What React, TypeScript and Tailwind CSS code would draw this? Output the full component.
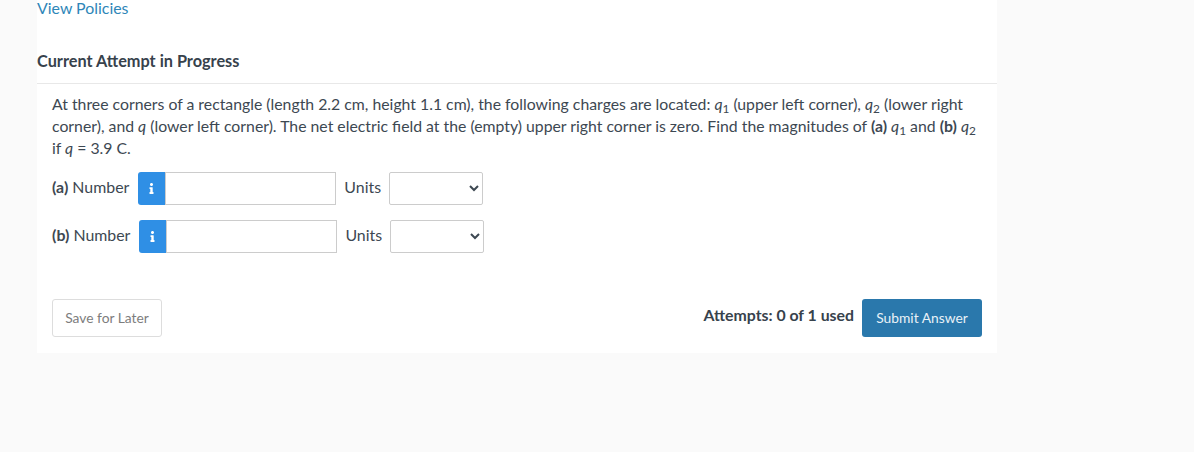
import { FaInfo } from 'react-icons/fa'

function Q({ n }: { n?: number }) {
  return (
    <span>
      <i>q</i>
      {n ? <sub>{n}</sub> : null}
    </span>
  )
}

function AnswerRow({ part }: { part: string }) {
  return (
    <div className="flex h-[33px] items-center">
      <span className="mb-1 mr-[9px] whitespace-nowrap text-[15.9px]">
        <b className="font-bold">({part})</b> Number
      </span>
      <button className="flex h-[33px] w-[27px] items-center justify-center rounded-l-[3px] bg-[#2f8fe5] text-white">
        <FaInfo className="h-[11px] w-[11px]" />
      </button>
      <input className="h-[33px] w-[170.5px] border border-[#ccc] bg-white" />
      <span className="mb-1 ml-[8.5px] mr-2 text-[15.9px]">Units</span>
      <select className="h-[33px] w-[94px] rounded-[2px] border border-[#ccc] bg-white">
        <option></option>
      </select>
    </div>
  )
}

export default function App() {
  return (
    <div className="h-[452px] overflow-hidden bg-[#fafafa] pl-[37px] font-['Lato','Open_Sans',sans-serif] text-[15.8px] text-[#3d4852]">
      <div className="h-[353px] w-[960px] bg-white">
        <a className="block h-[16px] text-[15.9px] leading-[16px] text-[#2e86b8]">View Policies</a>
        <h2 className="mt-[34px] text-[16.3px] leading-[22px] font-bold text-[#37424c]">Current Attempt in Progress</h2>
        <div className="mt-[11px] border-t border-[#e8e8e8] px-[15px] pt-[9px]">
          <p className="leading-[22px]">
            At three corners of a rectangle (length 2.2 cm, height 1.1 cm), the following charges are located: <Q n={1} /> (upper
            left corner), <Q n={2} /> (lower right corner), and <Q /> (lower left corner). The net electric field at the (empty)
            upper right corner is zero. Find the magnitudes of <b className="font-bold">(a)</b> <Q n={1} /> and{' '}
            <b className="font-bold">(b)</b> <Q n={2} /> if <Q /> = 3.9 C.
          </p>
          <div className="mt-[13px] flex flex-col gap-[15px]">
            <AnswerRow part="a" />
            <AnswerRow part="b" />
          </div>
          <div className="mt-[46px] flex items-center justify-between">
            <button className="h-[38px] w-[110px] rounded-[3px] border border-[#ddd] bg-white text-[13.8px] text-[#7d7d7d]">
              Save for Later
            </button>
            <div className="flex items-center">
              <span className="mb-[6px] mr-2 text-[15.85px] font-bold text-[#37424c]">Attempts: 0 of 1 used</span>
              <button className="h-[38px] w-[120px] rounded-[3px] bg-[#2a78ac] text-[13.8px] text-[#e8f1f7]">Submit Answer</button>
            </div>
          </div>
        </div>
      </div>
    </div>
  )
}
